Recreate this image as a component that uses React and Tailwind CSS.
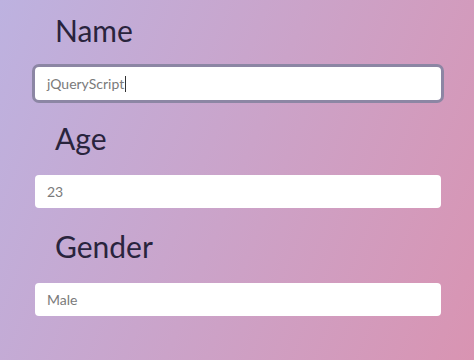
import React from "react";

const Field = ({ label, children }) => (
  <div className="pb-[20px]">
    <label className="ml-5 block text-[30px] leading-[36px] text-[#29243d]">
      {label}
    </label>
    <div className="mt-[19px]">{children}</div>
  </div>
);

const App = () => {
  return (
    <div
      className="h-[360px] w-full overflow-hidden bg-[linear-gradient(112deg,#bdb2e0,#d994b2)] pl-[35px] pr-[33px] pt-3"
      style={{ fontFamily: "Lato, 'Noto Sans', sans-serif" }}
    >
      <Field label="Name">
        {/* focused input with caret */}
        <div className="flex h-[33px] w-full items-center rounded-[4px] bg-white px-3 text-[14px] text-[#7a7a7a] shadow-[0_0_0_3px_#8c86a4]">
          <span>jQueryScript</span>
          <span className="ml-px h-[16px] w-px bg-[#333]"></span>
        </div>
      </Field>
      <Field label="Age">
        <input
          type="text"
          readOnly
          placeholder="23"
          className="h-[33px] w-full rounded-[4px] bg-white px-3 text-[14px] text-[#7a7a7a] outline-none placeholder:text-[#7a7a7a]"
        />
      </Field>
      <Field label="Gender">
        <input
          type="text"
          readOnly
          placeholder="Male"
          className="h-[33px] w-full rounded-[4px] bg-white px-3 text-[14px] text-[#7a7a7a] outline-none placeholder:text-[#7a7a7a]"
        />
      </Field>
    </div>
  );
};

export default App;
